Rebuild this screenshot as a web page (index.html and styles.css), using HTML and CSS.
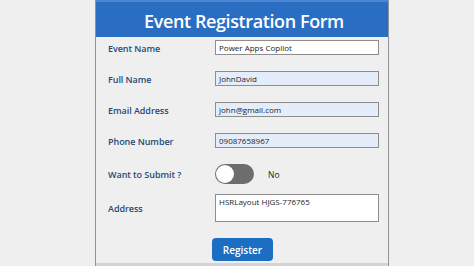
FILE: index.html
```html
<!DOCTYPE html>
<html>
<head>
<meta charset="utf-8">
<link rel="stylesheet" href="styles.css">
</head>
<body>
<div class="panel">
  <div class="header"><h1 class="title">Event Registration Form</h1></div>
  <div class="form">
    <div class="row">
      <span class="label">Event Name</span>
      <div class="field white">Power Apps Copilot</div>
    </div>
    <div class="row">
      <span class="label">Full Name</span>
      <div class="field">JohnDavid</div>
    </div>
    <div class="row">
      <span class="label">Email Address</span>
      <div class="field">john@gmail.com</div>
    </div>
    <div class="row">
      <span class="label">Phone Number</span>
      <div class="field">09087658967</div>
    </div>
    <div class="row toggle-row">
      <span class="label">Want to Submit ?</span>
      <div class="toggle-wrap">
        <div class="toggle"><div class="knob"></div></div>
        <span class="toggle-text">No</span>
      </div>
    </div>
    <div class="row address-row">
      <span class="label">Address</span>
      <div class="field white area">HSRLayout HJGS-776765</div>
    </div>
    <div class="actions">
      <button class="btn">Register</button>
    </div>
  </div>
  <div class="footer-line"></div>
</div>
</body>
</html>
```

FILE: styles.css
```css
html, body {
  margin: 0;
  padding: 0;
}
body {
  background: #efefef;
  font-family: "Open Sans", "Noto Sans", sans-serif;
  width: 474px;
  height: 266px;
  overflow: hidden;
}
.panel {
  margin-left: 95px;
  width: 292px;
  height: 266px;
  border-left: 1px solid #8f949b;
  border-right: 1px solid #8f949b;
  background: #efefef;
  display: flex;
  flex-direction: column;
}
.header {
  height: 37px;
  flex: none;
  background: #2a6ec4;
  border-top: 2px solid #4a86d2;
  box-sizing: border-box;
  display: flex;
  align-items: center;
  justify-content: center;
}
.title {
  margin: 0;
  color: #ffffff;
  font-size: 18px;
  font-weight: 600;
  letter-spacing: -0.4px;
  line-height: 1;
  padding-top: 2px;
  padding-left: 4px;
}
.form {
  padding: 3px 0 0 12px;
  display: flex;
  flex-direction: column;
  gap: 16px;
  flex: 1;
}
.row {
  display: flex;
  align-items: center;
  height: 15px;
}
.label {
  width: 107px;
  flex: none;
  font-size: 9px;
  font-weight: 600;
  letter-spacing: -0.05px;
  color: #1f4a78;
  padding-top: 1px;
}
.field {
  width: 164px;
  height: 15px;
  box-sizing: border-box;
  border: 1.5px solid #8d8d8d;
  background: #e5edfa;
  font-size: 8px;
  color: #1d1d1d;
  padding-left: 3px;
  display: flex;
  align-items: center;
  line-height: 1;
}
.field.white {
  background: #ffffff;
}
.toggle-row {
  height: 20px;
}
.toggle-wrap {
  display: flex;
  align-items: center;
}
.toggle {
  width: 39px;
  height: 20px;
  border-radius: 10px;
  background: #6d6d6d;
  display: flex;
  align-items: center;
  padding-left: 1px;
  box-sizing: border-box;
}
.knob {
  width: 18px;
  height: 18px;
  border-radius: 50%;
  background: #ffffff;
}
.toggle-text {
  margin-left: 14px;
  font-size: 8.5px;
  color: #222;
}
.address-row {
  height: 28px;
  margin-top: -6px;
}
.area {
  height: 28px;
  align-items: flex-start;
  padding-top: 3px;
}
.actions {
  display: flex;
  padding-left: 104px;
}
.btn {
  width: 61px;
  height: 23px;
  border: none;
  border-radius: 4px;
  background: #1b6ec2;
  color: #ffffff;
  font-family: "Open Sans", "Noto Sans", sans-serif;
  font-size: 10px;
  font-weight: 600;
  padding: 0;
}
.footer-line {
  height: 3px;
  flex: none;
  background: #d4d4d4;
}
```
